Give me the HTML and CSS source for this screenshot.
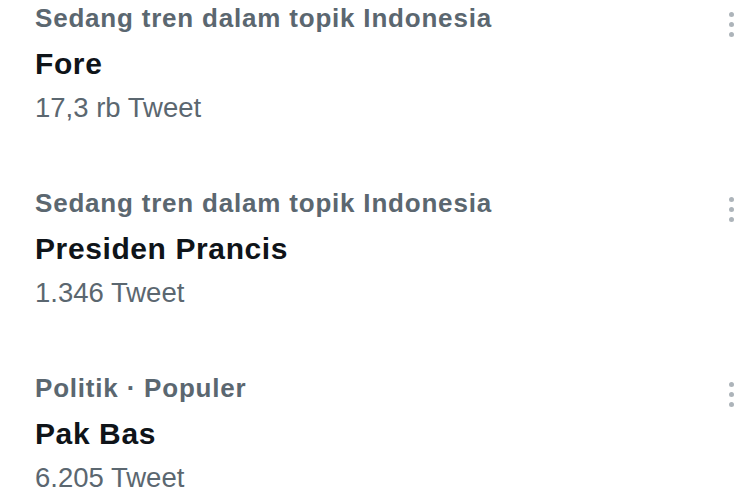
FILE: index.html
```html
<!DOCTYPE html>
<html lang="id">
<head>
<meta charset="utf-8">
<link rel="stylesheet" href="styles.css">
</head>
<body>
<ul class="trends">
  <li class="trend">
    <div class="trend-text">
      <div class="meta">Sedang tren dalam topik Indonesia</div>
      <div class="title">Fore</div>
      <div class="count">17,3 rb Tweet</div>
    </div>
    <div class="more" aria-label="Lainnya"><span></span><span></span><span></span></div>
  </li>
  <li class="trend">
    <div class="trend-text">
      <div class="meta">Sedang tren dalam topik Indonesia</div>
      <div class="title">Presiden Prancis</div>
      <div class="count">1.346 Tweet</div>
    </div>
    <div class="more" aria-label="Lainnya"><span></span><span></span><span></span></div>
  </li>
  <li class="trend">
    <div class="trend-text">
      <div class="meta">Politik · Populer</div>
      <div class="title">Pak Bas</div>
      <div class="count">6.205 Tweet</div>
    </div>
    <div class="more" aria-label="Lainnya"><span></span><span></span><span></span></div>
  </li>
</ul>
</body>
</html>
```

FILE: styles.css
```css
html, body {
  margin: 0;
  padding: 0;
  background: #ffffff;
}

body {
  font-family: "Liberation Sans", Arial, sans-serif;
  width: 750px;
  height: 500px;
  overflow: hidden;
}

.trends {
  list-style: none;
  margin: 0;
  padding: 0;
  display: flex;
  flex-direction: column;
  gap: 61px;
}

.trend {
  display: flex;
  justify-content: space-between;
  align-items: flex-start;
  padding: 2.5px 16px 0 35px;
}

.trend-text {
  display: flex;
  flex-direction: column;
}

.meta {
  font-size: 26px;
  line-height: 31px;
  font-weight: 700;
  letter-spacing: 0.8px;
  color: #5b6770;
}

.title {
  font-size: 30px;
  line-height: 35px;
  font-weight: 700;
  letter-spacing: 0.6px;
  color: #0f1419;
  margin-top: 12px;
}

.count {
  font-size: 27.5px;
  line-height: 33px;
  color: #5b6770;
  margin-top: 10.5px;
}

.more {
  display: flex;
  flex-direction: column;
  align-items: center;
  gap: 5px;
  margin-top: 9px;
  width: 6px;
}

.more span {
  width: 5px;
  height: 5px;
  border-radius: 50%;
  background: #adb4ba;
}
```
